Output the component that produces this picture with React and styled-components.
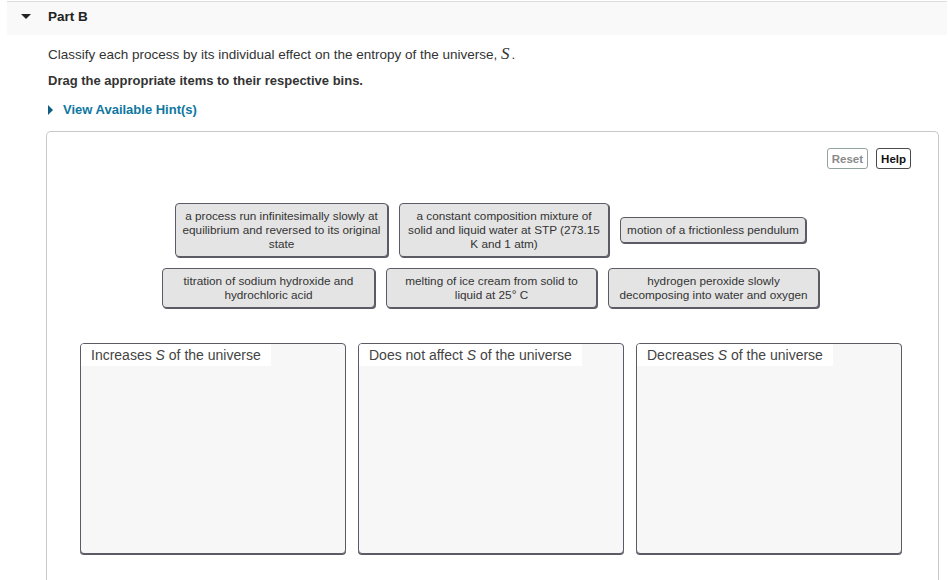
import React from "react";
import styled, { createGlobalStyle } from "styled-components";

const GlobalStyle = createGlobalStyle`
  html, body {
    margin: 0;
    padding: 0;
    background: #fff;
    font-family: "Liberation Sans", Arial, sans-serif;
    color: #333;
  }
`;

const Page = styled.div`
  width: 948px;
  height: 580px;
  overflow: hidden;
`;

const PartHeader = styled.div`
  margin: 1px 1px 0 7px;
  height: 34px;
  border-top: 1px solid #dedede;
  background: #f9f9f9;
  display: flex;
  align-items: center;
  gap: 17px;
  padding-left: 14px;
  padding-bottom: 4px;
  box-sizing: border-box;
`;

const DownCaret = styled.span`
  width: 0;
  height: 0;
  border-left: 5px solid transparent;
  border-right: 5px solid transparent;
  border-top: 5px solid #222;
`;

const PartTitle = styled.h2`
  margin: 0;
  font-size: 13.5px;
  font-weight: bold;
  color: #222;
`;

const Body = styled.div`
  padding: 10px 9px 0 46px;
`;

const Prompt = styled.p`
  margin: 0 0 0 2px;
  font-size: 13.5px;
  line-height: 17px;
  color: #333;
`;

const MathS = styled.span`
  font-family: "Liberation Serif", "Times New Roman", serif;
  font-style: italic;
  font-size: 17px;
  margin-right: 2px;
`;

const Instruction = styled.p`
  margin: 9px 0 0 2px;
  font-size: 13px;
  font-weight: bold;
  line-height: 17px;
  color: #333;
`;

const HintLink = styled.a`
  display: flex;
  align-items: center;
  gap: 10px;
  margin: 12px 0 0 2px;
  font-size: 13px;
  line-height: 17px;
  font-weight: bold;
  color: #0e77a1;
  text-decoration: none;
  cursor: pointer;
`;

const RightCaret = styled.span`
  width: 0;
  height: 0;
  border-top: 5px solid transparent;
  border-bottom: 5px solid transparent;
  border-left: 5px solid #0e5f82;
`;

const Panel = styled.div`
  margin-top: 13px;
  border: 1px solid #c9c9c9;
  border-bottom: none;
  border-radius: 5px 5px 0 0;
  height: 460px;
  box-sizing: border-box;
  padding: 16px 27px 0 33px;
`;

const Toolbar = styled.div`
  display: flex;
  justify-content: flex-end;
  gap: 8px;
`;

const ToolButton = styled.button`
  font-family: "Liberation Sans", Arial, sans-serif;
  font-size: 11.5px;
  font-weight: bold;
  height: 21px;
  padding: 0 4px;
  background: #fff;
  border-radius: 3px;
  cursor: pointer;
  color: ${(p) => (p.disabled ? "#8a8a8a" : "#111")};
  border: 1px solid ${(p) => (p.disabled ? "#93a3a0" : "#4a4a4a")};
`;

const Items = styled.div`
  margin: 34px 10px 0 0;
  display: flex;
  flex-direction: column;
  gap: 11px;
  align-items: center;
`;

const ItemRow = styled.div`
  display: flex;
  align-items: center;
  gap: 11px;
`;

const Item = styled.div`
  width: ${(p) => p.$w}px;
  box-sizing: border-box;
  padding: 5px 5px;
  background: #e4e4e4;
  border: 1px solid #5b5b66;
  border-radius: 4px;
  box-shadow: 1px 1px 0 #5b5b66;
  font-size: 11.75px;
  line-height: 14px;
  text-align: center;
  color: #333;
  cursor: move;
`;

const Deg = styled.span`
  font-size: 12px;
`;

const Bins = styled.div`
  margin-top: 35px;
  display: grid;
  grid-template-columns: repeat(3, 266px);
  gap: 12px;
  justify-content: start;
`;

const Bin = styled.div`
  height: 211px;
  box-sizing: border-box;
  background: #f7f7f7;
  border: 1px solid #5b5b66;
  border-radius: 4px;
  box-shadow: 0 1px 0 #5b5b66;
`;

const BinLabel = styled.div`
  display: inline-block;
  background: #fff;
  padding: 3px 10px;
  font-size: 14px;
  line-height: 16px;
  color: #444;
  border-top-left-radius: 3px;
`;

const LabelS = styled.span`
  font-style: italic;
`;

const rows = [
  [
    { w: 213, text: "a process run infinitesimally slowly at equilibrium and reversed to its original state" },
    { w: 210, text: "a constant composition mixture of solid and liquid water at STP (273.15 K and 1 atm)" },
    { w: 186, text: "motion of a frictionless pendulum" },
  ],
  [
    { w: 213, text: "titration of sodium hydroxide and hydrochloric acid" },
    { w: 211, text: <>melting of ice cream from solid to liquid at 25<Deg>°</Deg> C</> },
    { w: 211, text: "hydrogen peroxide slowly decomposing into water and oxygen" },
  ],
];

const bins = [
  ["Increases ", " of the universe"],
  ["Does not affect ", " of the universe"],
  ["Decreases ", " of the universe"],
];

export default function App() {
  return (
    <Page>
      <GlobalStyle />
      <PartHeader>
        <DownCaret />
        <PartTitle>Part B</PartTitle>
      </PartHeader>
      <Body>
        <Prompt>
          Classify each process by its individual effect on the entropy of the universe, <MathS>S</MathS>.
        </Prompt>
        <Instruction>Drag the appropriate items to their respective bins.</Instruction>
        <HintLink>
          <RightCaret />
          View Available Hint(s)
        </HintLink>
        <Panel>
          <Toolbar>
            <ToolButton disabled>Reset</ToolButton>
            <ToolButton>Help</ToolButton>
          </Toolbar>
          <Items>
            {rows.map((row, i) => (
              <ItemRow key={i}>
                {row.map((it, j) => (
                  <Item key={j} $w={it.w}>
                    {it.text}
                  </Item>
                ))}
              </ItemRow>
            ))}
          </Items>
          <Bins>
            {bins.map(([a, b]) => (
              <Bin key={a}>
                <BinLabel>
                  {a}
                  <LabelS>S</LabelS>
                  {b}
                </BinLabel>
              </Bin>
            ))}
          </Bins>
        </Panel>
      </Body>
    </Page>
  );
}
